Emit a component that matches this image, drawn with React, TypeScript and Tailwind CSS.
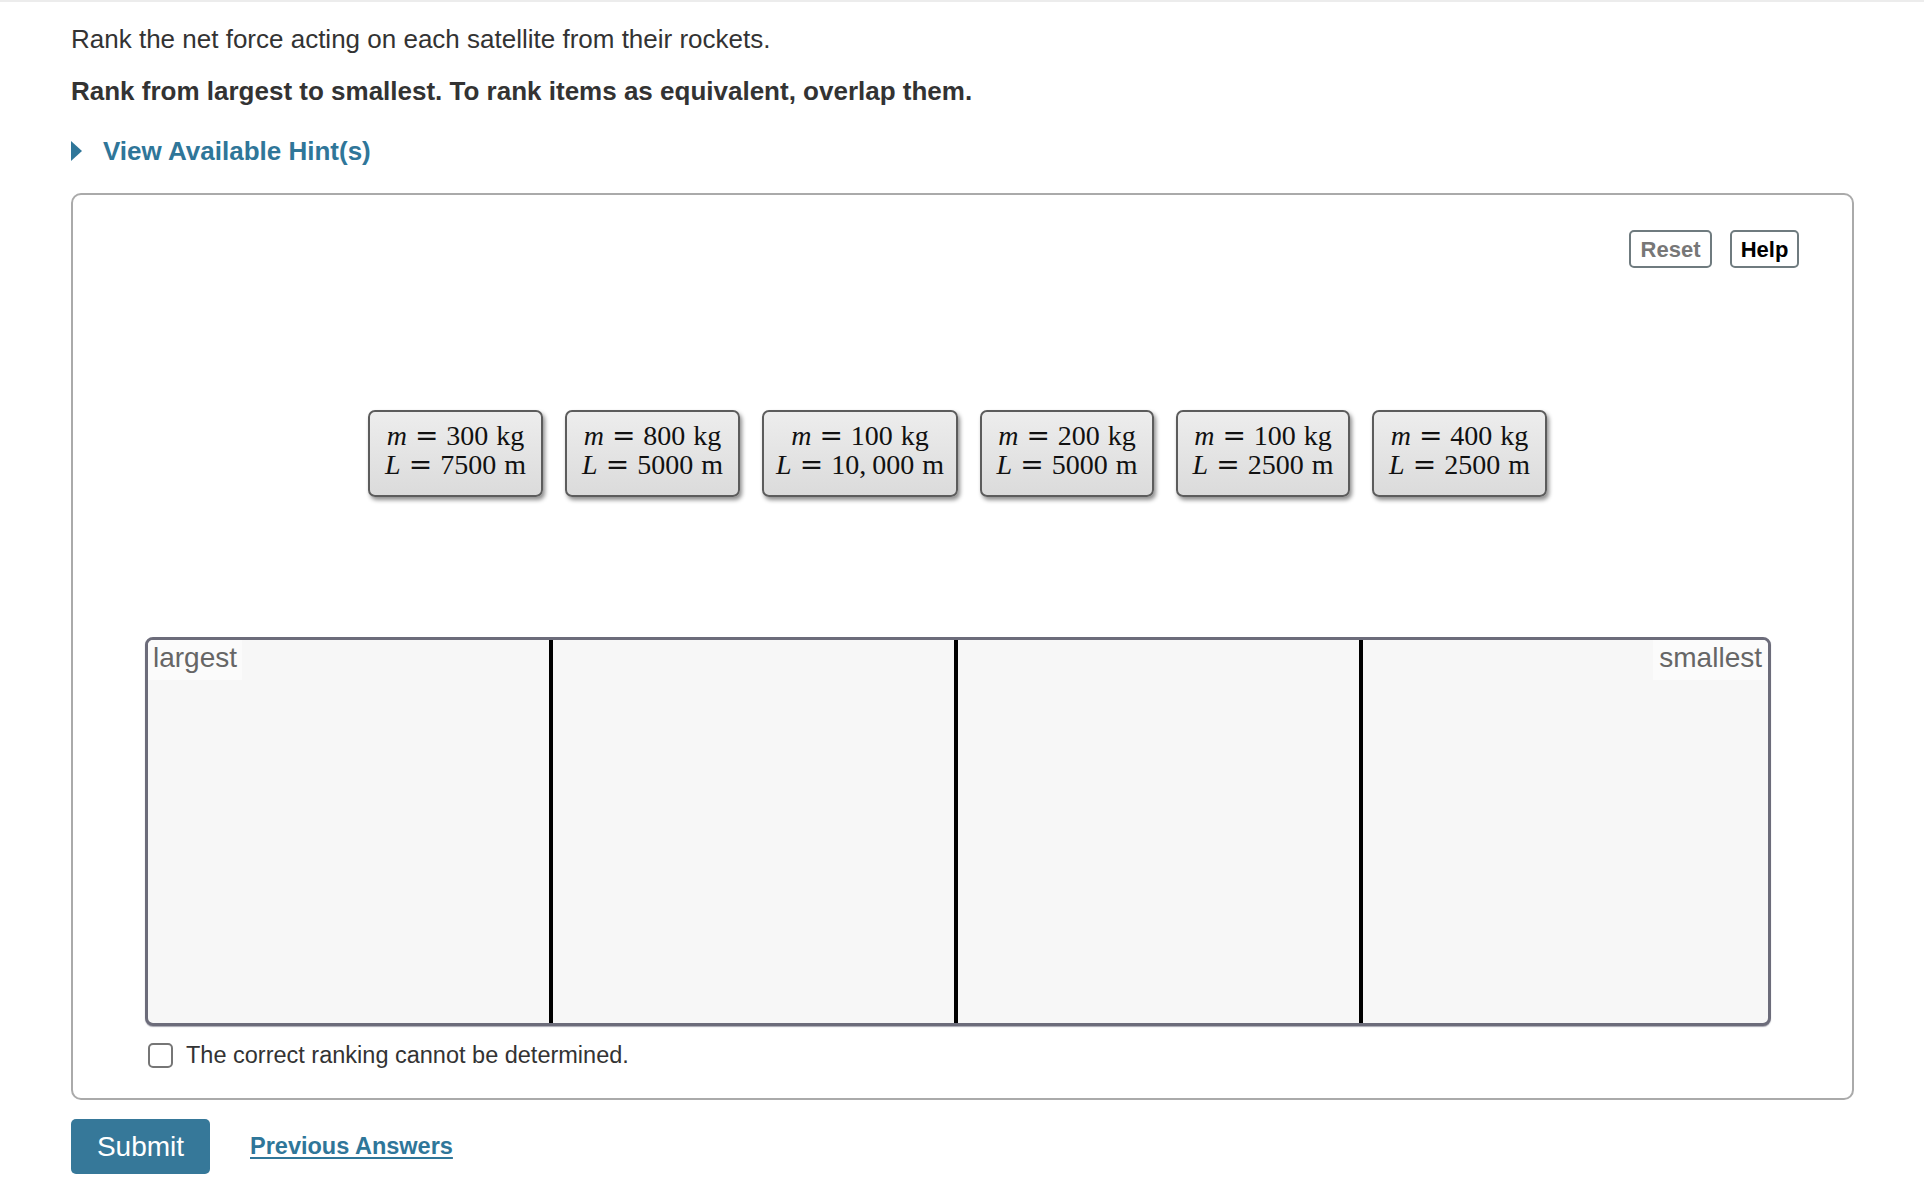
import React from "react";

const serif = { fontFamily: '"Liberation Serif", "Times New Roman", serif' };

function Eq() {
  return (
    <span
      className="mx-[8px] inline-block"
      style={{ fontFamily: '"DejaVu Serif", "Liberation Serif", serif' }}
    >
      =
    </span>
  );
}

type TileProps = { m: string; L: React.ReactNode; w: string };

function Tile({ m, L, w }: TileProps) {
  return (
    <div
      className={`${w} h-[87px] shrink-0 rounded-[7px] border-2 border-[#5c5c5c] bg-linear-to-b from-[#ededed] to-[#dbdbdb] shadow-[2px_3px_4px_rgba(0,0,0,0.45)] flex flex-col items-center justify-center pb-[7px] text-[28px] leading-[29px] text-[#111]`}
      style={serif}
    >
      <div className="flex items-baseline whitespace-nowrap">
        <span className="italic">m</span>
        <Eq />
        <span>{m}</span>
        <span className="ml-[8px]">kg</span>
      </div>
      <div className="flex items-baseline whitespace-nowrap">
        <span className="italic">L</span>
        <Eq />
        <span>{L}</span>
        <span className="ml-[8px]">m</span>
      </div>
    </div>
  );
}

export default function App() {
  return (
    <div
      className="min-h-[1196px] bg-white border-t-2 border-[#ececec] pl-[71px] pt-[22px] text-[#333]"
      style={{ fontFamily: '"Liberation Sans", Arial, Helvetica, sans-serif' }}
    >
      <p className="text-[26px] leading-[30px]">
        Rank the net force acting on each satellite from their rockets.
      </p>
      <p className="mt-[22px] text-[26px] leading-[30px] font-bold">
        Rank from largest to smallest. To rank items as equivalent, overlap them.
      </p>
      <div className="mt-[30px] flex items-center h-[30px]">
        <svg width="11" height="20" viewBox="0 0 11 20" className="shrink-0">
          <polygon points="0,0 11,10 0,20" fill="#2f7699" />
        </svg>
        <span className="ml-[21px] text-[26px] leading-[30px] font-bold text-[#2f7699]">
          View Available Hint(s)
        </span>
      </div>

      <div className="mt-[27px] w-[1783px] rounded-[10px] border-2 border-[#aaaaaa] pt-[35px] pb-[30px]">
        <div className="flex justify-end pr-[53px] gap-[18px]">
          <button className="w-[83px] h-[38px] rounded-[5px] border-2 border-[#6f7b7f] bg-white text-[22px] font-bold text-[#777]">
            Reset
          </button>
          <button className="w-[69px] h-[38px] rounded-[5px] border-2 border-[#6f7b7f] bg-white text-[22px] font-bold text-black">
            Help
          </button>
        </div>

        <div className="mt-[142px] flex pl-[295px] gap-[22px]">
          <Tile w="w-[175px]" m="300" L="7500" />
          <Tile w="w-[175px]" m="800" L="5000" />
          <Tile
            w="w-[196px]"
            m="100"
            L={
              <>
                10,<span className="ml-[6px]">000</span>
              </>
            }
          />
          <Tile w="w-[174px]" m="200" L="5000" />
          <Tile w="w-[174px]" m="100" L="2500" />
          <Tile w="w-[175px]" m="400" L="2500" />
        </div>

        <div className="mt-[140px] ml-[72px] w-[1626px] h-[389px] rounded-[8px] border-[3px] border-[#6c6c7a] bg-[#f7f7f7] shadow-[0_1px_1px_rgba(80,80,100,0.5)] overflow-hidden grid grid-cols-4">
          <div className="border-r-4 border-black">
            <span className="inline-block bg-[#fbfbfb] px-[5px] h-[40px] text-[28px] leading-[36px] text-[#666]">
              largest
            </span>
          </div>
          <div className="border-r-4 border-black" />
          <div className="border-r-4 border-black" />
          <div className="flex justify-end items-start">
            <span className="inline-block bg-[#fbfbfb] pl-[6px] pr-[6px] h-[40px] text-[28px] leading-[36px] text-[#666]">
              smallest
            </span>
          </div>
        </div>

        <div className="mt-[16px] ml-[75px] flex items-center">
          <div className="w-[25px] h-[25px] rounded-[5px] border-2 border-[#767676] bg-white shrink-0" />
          <span className="ml-[13px] text-[23.5px] leading-[26px] text-[#333]">
            The correct ranking cannot be determined.
          </span>
        </div>
      </div>

      <div className="mt-[19px] flex items-center">
        <button className="w-[139px] h-[55px] rounded-[5px] bg-[#367899] text-white text-[28px]">
          Submit
        </button>
        <a className="ml-[40px] text-[23.5px] font-bold text-[#2f7699] underline underline-offset-[3px] decoration-[2px]">
          Previous Answers
        </a>
      </div>
    </div>
  );
}
